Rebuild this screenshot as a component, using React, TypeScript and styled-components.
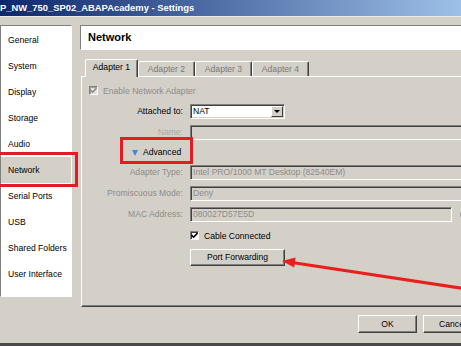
import React from 'react';
import styled, { createGlobalStyle } from 'styled-components';

const GlobalStyle = createGlobalStyle`
  html, body {
    margin: 0;
    padding: 0;
    background: #d4d0c8;
  }
  body {
    width: 461px;
    height: 346px;
    overflow: hidden;
    font-family: 'Liberation Sans', Arial, sans-serif;
    font-size: 8.6px;
    color: #000;
  }
`;

const sections = [
  'General',
  'System',
  'Display',
  'Storage',
  'Audio',
  'Network',
  'Serial Ports',
  'USB',
  'Shared Folders',
  'User Interface',
];

const adapters = ['Adapter 1', 'Adapter 2', 'Adapter 3', 'Adapter 4'];

const Check: React.FC<{ color: string }> = ({ color }) => (
  <svg width="7" height="7" viewBox="0 0 7 7">
    <path d="M0.5 3 L2.6 5.2 L6.5 1" fill="none" stroke={color} strokeWidth="1.6" />
  </svg>
);

const App: React.FC<{}> = () => {
  return (
    <Viewport>
      <GlobalStyle />
      <Window>
        <TitleBar>P_NW_750_SP02_ABAPAcademy - Settings</TitleBar>
        <Body>
          <SectionList>
            {sections.map((name) => (
              <SectionItem key={name} $selected={name === 'Network'}>
                {name}
              </SectionItem>
            ))}
          </SectionList>
          <Main>
            <PageHeader>Network</PageHeader>
            <TabRow>
              {adapters.map((a, i) => (
                <Tab key={a} $active={i === 0}>
                  {a}
                </Tab>
              ))}
            </TabRow>
            <TabPanel>
              <Form>
                <CheckRow $span>
                  <CheckBox $disabled>
                    <Check color="#8c8c8c" />
                  </CheckBox>
                  <Label $muted>Enable Network Adapter</Label>
                </CheckRow>

                <FieldLabel>Attached to:</FieldLabel>
                <Combo>
                  <ComboText>NAT</ComboText>
                  <DropButton>
                    <DropArrow />
                  </DropButton>
                </Combo>

                <FieldLabel $muted $light>Name:</FieldLabel>
                <Field $disabled />

                <AdvancedToggle>
                  <Triangle />
                  <span>Advanced</span>
                </AdvancedToggle>

                <FieldLabel $muted>Adapter Type:</FieldLabel>
                <Field $disabled>Intel PRO/1000 MT Desktop (82540EM)</Field>

                <FieldLabel $muted>Promiscuous Mode:</FieldLabel>
                <Field $disabled>Deny</Field>

                <FieldLabel $muted>MAC Address:</FieldLabel>
                <FieldWithTool>
                  <Field $disabled>080027D57E5D</Field>
                  <ToolButton>
                    <svg width="14" height="14" viewBox="0 0 14 14">
                      <path d="M3 3.5 A5 5 0 1 0 11.5 5" fill="none" stroke="#9a9a9a" strokeWidth="1.4" />
                    </svg>
                  </ToolButton>
                </FieldWithTool>

                <CheckRow $col2>
                  <CheckBox>
                    <Check color="#000" />
                  </CheckBox>
                  <Label>Cable Connected</Label>
                </CheckRow>

                <PushButton $width={95} $col2>Port Forwarding</PushButton>
              </Form>
            </TabPanel>
            <ButtonRow>
              <PushButton $width={59}>OK</PushButton>
              <PushButton $width={59}>Cancel</PushButton>
            </ButtonRow>
          </Main>
        </Body>
      </Window>
      <Arrow width="461" height="346" viewBox="0 0 461 346">
        <line x1="472" y1="289.8" x2="292" y2="262.5" stroke="#e8201d" strokeWidth="3" />
        <polygon points="282,261 295.5,257.6 294.2,267.4" fill="#e8201d" />
      </Arrow>
    </Viewport>
  );
};

const Viewport = styled.div`
  position: relative;
  width: 461px;
  height: 346px;
  overflow: hidden;
`;

const Window = styled.div`
  width: 498px;
  height: 346px;
  margin-left: -8px;
  box-sizing: border-box;
  background: #d4d0c8;
  display: flex;
  flex-direction: column;
  border-bottom: 3px solid #4a4a4a;
`;

const TitleBar = styled.div`
  flex: none;
  height: 16px;
  padding-left: 8px;
  background: linear-gradient(to right, #0a246a, #a6caf0);
  border-bottom: 1px solid #ebe9e3;
  color: #fff;
  font-weight: bold;
  font-size: 9.4px;
  line-height: 16px;
  white-space: nowrap;
`;

const Body = styled.div`
  display: flex;
  align-items: flex-start;
  gap: 8px;
  padding: 8px 8px 0 8px;
`;

const SectionList = styled.div`
  flex: none;
  width: 72px;
  height: 272px;
  box-sizing: border-box;
  padding-top: 1px;
  background: #fff;
  border: 1px solid;
  border-color: #808080 #fff #fff #808080;
`;

const SectionItem = styled.div<{ $selected?: boolean }>`
  position: relative;
  height: 26px;
  line-height: 26px;
  padding-left: 7px;
  white-space: nowrap;
  background: ${(p) => (p.$selected ? '#d4d0c8' : 'transparent')};

  ${(p) =>
    p.$selected &&
    `
    &::after {
      content: '';
      position: absolute;
      top: -5px;
      bottom: -4px;
      left: -4px;
      right: -7px;
      border: 3px solid #e31b23;
    }
  `}
`;

const Main = styled.div`
  flex: 1;
  display: flex;
  flex-direction: column;
`;

const PageHeader = styled.div`
  height: 25px;
  box-sizing: border-box;
  padding-left: 7px;
  background: #fff;
  border: 1px solid;
  border-color: #808080 #fff #fff #808080;
  font-size: 11px;
  font-weight: bold;
  line-height: 23px;
`;

const TabRow = styled.div`
  display: flex;
  align-items: flex-end;
  height: 17px;
  margin-top: 9px;
  padding-left: 5px;
`;

const Tab = styled.div<{ $active?: boolean }>`
  position: relative;
  z-index: ${(p) => (p.$active ? 1 : 0)};
  width: ${(p) => (p.$active ? 53 : 57)}px;
  height: ${(p) => (p.$active ? 18 : 15)}px;
  margin-bottom: ${(p) => (p.$active ? -1 : 0)}px;
  box-sizing: border-box;
  background: #d4d0c8;
  border-top: 1px solid #fff;
  border-left: 1px solid #fff;
  border-right: 1px solid #404040;
  border-radius: 2px 2px 0 0;
  box-shadow: inset -1px 0 #808080;
  color: ${(p) => (p.$active ? '#000' : '#7a7a7a')};
  text-align: center;
  line-height: ${(p) => (p.$active ? 15 : 14)}px;
  white-space: nowrap;
`;

const TabPanel = styled.div`
  height: 231px;
  margin-left: 1px;
  box-sizing: border-box;
  padding: 6px 7px 0 7px;
  border: 1px solid;
  border-color: #fff #404040 #404040 #fff;
  box-shadow: inset -1px -1px #808080;
`;

const Form = styled.div`
  display: grid;
  grid-template-columns: 94px 1fr;
  grid-template-rows: 15px 15px 15px 13px 15px 15px 15px 15px 17px;
  column-gap: 7px;
  row-gap: 6px;
`;

const Label = styled.span<{ $muted?: boolean }>`
  color: ${(p) => (p.$muted ? '#8c8c8c' : '#000')};
  white-space: nowrap;
`;

const FieldLabel = styled.div<{ $muted?: boolean; $light?: boolean }>`
  text-align: right;
  line-height: 15px;
  white-space: nowrap;
  color: ${(p) => (p.$light ? '#a8a8a8' : p.$muted ? '#8c8c8c' : '#000')};
`;

const CheckRow = styled.div<{ $span?: boolean; $col2?: boolean }>`
  display: flex;
  align-items: center;
  gap: 5px;
  grid-column: ${(p) => (p.$span ? '1 / -1' : p.$col2 ? '2' : 'auto')};
`;

const CheckBox = styled.div<{ $disabled?: boolean }>`
  width: 9px;
  height: 9px;
  box-sizing: border-box;
  display: flex;
  align-items: center;
  justify-content: center;
  background: ${(p) => (p.$disabled ? '#e4e2dc' : '#fff')};
  border: 1px solid;
  border-color: #808080 #fff #fff #808080;
  box-shadow: inset 1px 1px ${(p) => (p.$disabled ? '#a0a0a0' : '#404040')};
`;

const sunken = `
  box-sizing: border-box;
  border: 1px solid;
  border-color: #808080 #fff #fff #808080;
  box-shadow: inset 1px 1px #404040, inset -1px -1px #d4d0c8;
`;

const Field = styled.div<{ $disabled?: boolean }>`
  ${sunken}
  flex: 1;
  height: 15px;
  padding-left: 2px;
  background: ${(p) => (p.$disabled ? '#d4d0c8' : '#fff')};
  color: ${(p) => (p.$disabled ? '#8c8c8c' : '#000')};
  line-height: 13px;
  white-space: nowrap;
  overflow: hidden;
`;

const Combo = styled.div`
  ${sunken}
  width: 95px;
  height: 15px;
  display: flex;
  align-items: stretch;
  padding: 1px;
  background: #fff;
`;

const ComboText = styled.div`
  flex: 1;
  padding-left: 1px;
  line-height: 11px;
`;

const DropButton = styled.div`
  width: 12px;
  box-sizing: border-box;
  display: flex;
  align-items: center;
  justify-content: center;
  background: #d4d0c8;
  border: 1px solid;
  border-color: #fff #404040 #404040 #fff;
`;

const DropArrow = styled.div`
  width: 0;
  height: 0;
  border-left: 3px solid transparent;
  border-right: 3px solid transparent;
  border-top: 3px solid #000;
`;

const AdvancedToggle = styled.div`
  grid-column: 1 / -1;
  position: relative;
  justify-self: start;
  display: flex;
  align-items: center;
  gap: 5px;
  margin-left: 43px;
  line-height: 13px;

  &::after {
    content: '';
    position: absolute;
    top: -9px;
    bottom: -5px;
    left: -12px;
    right: -12px;
    border: 3px solid #e31b23;
  }
`;

const Triangle = styled.div`
  width: 0;
  height: 0;
  border-left: 3.5px solid transparent;
  border-right: 3.5px solid transparent;
  border-top: 6px solid #3b8be0;
`;

const FieldWithTool = styled.div`
  display: flex;
  gap: 6px;
`;

const ToolButton = styled.div`
  width: 16px;
  height: 15px;
  display: flex;
  align-items: center;
  justify-content: center;
`;

const PushButton = styled.div<{ $width: number; $col2?: boolean }>`
  grid-column: ${(p) => (p.$col2 ? '2' : 'auto')};
  width: ${(p) => p.$width}px;
  height: ${(p) => (p.$col2 ? 17 : 18)}px;
  box-sizing: border-box;
  background: #d4d0c8;
  border: 1px solid;
  border-color: #fff #404040 #404040 #fff;
  box-shadow: inset -1px -1px #808080;
  text-align: center;
  line-height: ${(p) => (p.$col2 ? 15 : 16)}px;
  white-space: nowrap;
`;

const ButtonRow = styled.div`
  display: flex;
  justify-content: flex-end;
  gap: 6px;
  margin-top: 8px;
`;

const Arrow = styled.svg`
  position: absolute;
  top: 0;
  left: 0;
  pointer-events: none;
`;

export default App;
